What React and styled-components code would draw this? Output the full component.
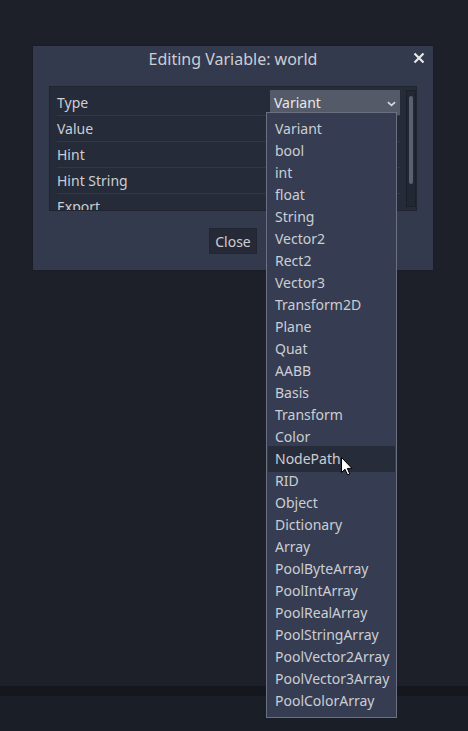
import React from "react";
import styled, { createGlobalStyle } from "styled-components";

const COLOR = {
  PAGE: "#1d2029",
  DIALOG: "#333a4d",
  PANEL: "#262b39",
  LINE: "#313747",
  POPUP: "#363d52",
  TEXT: "#ccced3",
  BRIGHT: "#e8e8ea",
};

const TYPES = [
  "Variant", "bool", "int", "float", "String", "Vector2", "Rect2", "Vector3",
  "Transform2D", "Plane", "Quat", "AABB", "Basis", "Transform", "Color",
  "NodePath", "RID", "Object", "Dictionary", "Array", "PoolByteArray",
  "PoolIntArray", "PoolRealArray", "PoolStringArray", "PoolVector2Array",
  "PoolVector3Array", "PoolColorArray",
];

const PROPS = ["Type", "Value", "Hint", "Hint String", "Export"];

const GlobalStyle = createGlobalStyle`
  html, body {
    margin: 0;
    padding: 0;
    background: ${COLOR.PAGE};
  }
  body {
    font-family: "Noto Sans", "DejaVu Sans", sans-serif;
    font-size: 14px;
    color: ${COLOR.TEXT};
  }
`;

function App() {
  return (
    <Page>
      <GlobalStyle />
      <Workspace>
        <Dialog>
          <TitleBar>
            <Title>Editing Variable: world</Title>
            <CloseIcon viewBox="0 0 12 12">
              <path d="M1.5 1.5 L10.5 10.5 M10.5 1.5 L1.5 10.5" />
            </CloseIcon>
          </TitleBar>
          <Inspector>
            <Rows>
              {PROPS.map((name) => (
                <Row key={name}>
                  <Label>{name}</Label>
                  {name === "Type" && (
                    <Dropdown>
                      <span>Variant</span>
                      <Chevron viewBox="0 0 10 6">
                        <path d="M1 1 L5 4.5 L9 1" />
                      </Chevron>
                    </Dropdown>
                  )}
                </Row>
              ))}
            </Rows>
            <ScrollTrack>
              <ScrollGrab />
            </ScrollTrack>
          </Inspector>
          <Footer>
            <Button>Close</Button>
          </Footer>
        </Dialog>
      </Workspace>
      <Divider />
      <BottomBar />

      <Popup>
        {TYPES.map((t) => (
          <Item key={t} $hover={t === "NodePath"}>
            {t}
          </Item>
        ))}
      </Popup>
      <Cursor viewBox="0 0 12 19">
        <path d="M0.5 0.5 L0.5 15.5 L4 12.2 L6.6 18 L8.8 17 L6.3 11.4 L11 11.4 Z" />
      </Cursor>
    </Page>
  );
}

const Page = styled.div`
  position: relative;
  display: flex;
  flex-direction: column;
  width: 468px;
  height: 731px;
  overflow: hidden;
  background: ${COLOR.PAGE};
`;

const Workspace = styled.div`
  flex: 1;
  padding: 46px 0 0 33px;
`;

const Dialog = styled.div`
  box-sizing: border-box;
  width: 400px;
  height: 224px;
  background: ${COLOR.DIALOG};
  box-shadow: 0 0 0 1px #1a1d25;
  padding: 0 16px;
  display: flex;
  flex-direction: column;
`;

const TitleBar = styled.div`
  position: relative;
  height: 26px;
  display: flex;
  align-items: center;
  justify-content: center;
`;

const Title = styled.div`
  font-size: 16px;
  color: ${COLOR.TEXT};
  margin-top: -1px;
`;

const CloseIcon = styled.svg`
  position: absolute;
  right: -8px;
  top: 6px;
  width: 12px;
  height: 12px;
  stroke: ${COLOR.BRIGHT};
  stroke-width: 2.2;
  fill: none;
`;

const Inspector = styled.div`
  box-sizing: border-box;
  margin-top: 14px;
  height: 125px;
  background: ${COLOR.PANEL};
  border: 1px solid #20242f;
  display: flex;
  padding: 3px 0 0 7px;
  overflow: hidden;
`;

const Rows = styled.div`
  width: 343px;
  display: flex;
  flex-direction: column;
`;

const Row = styled.div`
  flex: none;
  height: 25px;
  border-bottom: 1px solid ${COLOR.LINE};
  display: flex;
  align-items: center;
  justify-content: space-between;
`;

const Label = styled.span`
  color: ${COLOR.TEXT};
`;

const Dropdown = styled.div`
  box-sizing: border-box;
  width: 130px;
  height: 25px;
  background: #555a68;
  color: ${COLOR.BRIGHT};
  display: flex;
  align-items: center;
  justify-content: space-between;
  padding: 0 4px;
`;

const Chevron = styled.svg`
  width: 9px;
  height: 6px;
  stroke: #d8d9dd;
  stroke-width: 1.8;
  fill: none;
  margin-top: 2px;
`;

const ScrollTrack = styled.div`
  box-sizing: border-box;
  width: 10px;
  margin: 0 0 3px 6px;
  background: #222734;
  border: 1px solid #1c2029;
  padding: 5px 2px 0 2px;
`;

const ScrollGrab = styled.div`
  width: 4px;
  height: 88px;
  border-radius: 2px;
  background: #5b6070;
`;

const Footer = styled.div`
  display: flex;
  justify-content: center;
  margin-top: 17px;
`;

const Button = styled.div`
  box-sizing: border-box;
  width: 48px;
  height: 26px;
  background: #252a36;
  border: 1px solid #222633;
  color: ${COLOR.TEXT};
  display: flex;
  align-items: center;
  justify-content: center;
`;

const Divider = styled.div`
  height: 10px;
  background: #14171d;
`;

const BottomBar = styled.div`
  height: 35px;
  background: #1a1e26;
`;

const Popup = styled.div`
  position: absolute;
  left: 266px;
  top: 112px;
  box-sizing: border-box;
  width: 131px;
  height: 606px;
  padding: 5px 1px 0 1px;
  background: ${COLOR.POPUP};
  border: 1px solid #6b7181;
  display: flex;
  flex-direction: column;
`;

const Item = styled.div`
  position: relative;
  height: 22px;
  line-height: 22px;
  padding-left: 7px;
  color: ${COLOR.TEXT};
  white-space: nowrap;
  z-index: 0;

  &::before {
    content: "";
    position: absolute;
    left: 0;
    right: 0;
    top: -2px;
    bottom: -2px;
    z-index: -1;
    background: ${(p) => (p.$hover ? "#272c3a" : "transparent")};
  }
`;

const Cursor = styled.svg`
  position: absolute;
  left: 341px;
  top: 457px;
  width: 12px;
  height: 19px;
  fill: #ffffff;
  stroke: #000000;
  stroke-width: 1;
  stroke-linejoin: miter;
`;

export default App;
